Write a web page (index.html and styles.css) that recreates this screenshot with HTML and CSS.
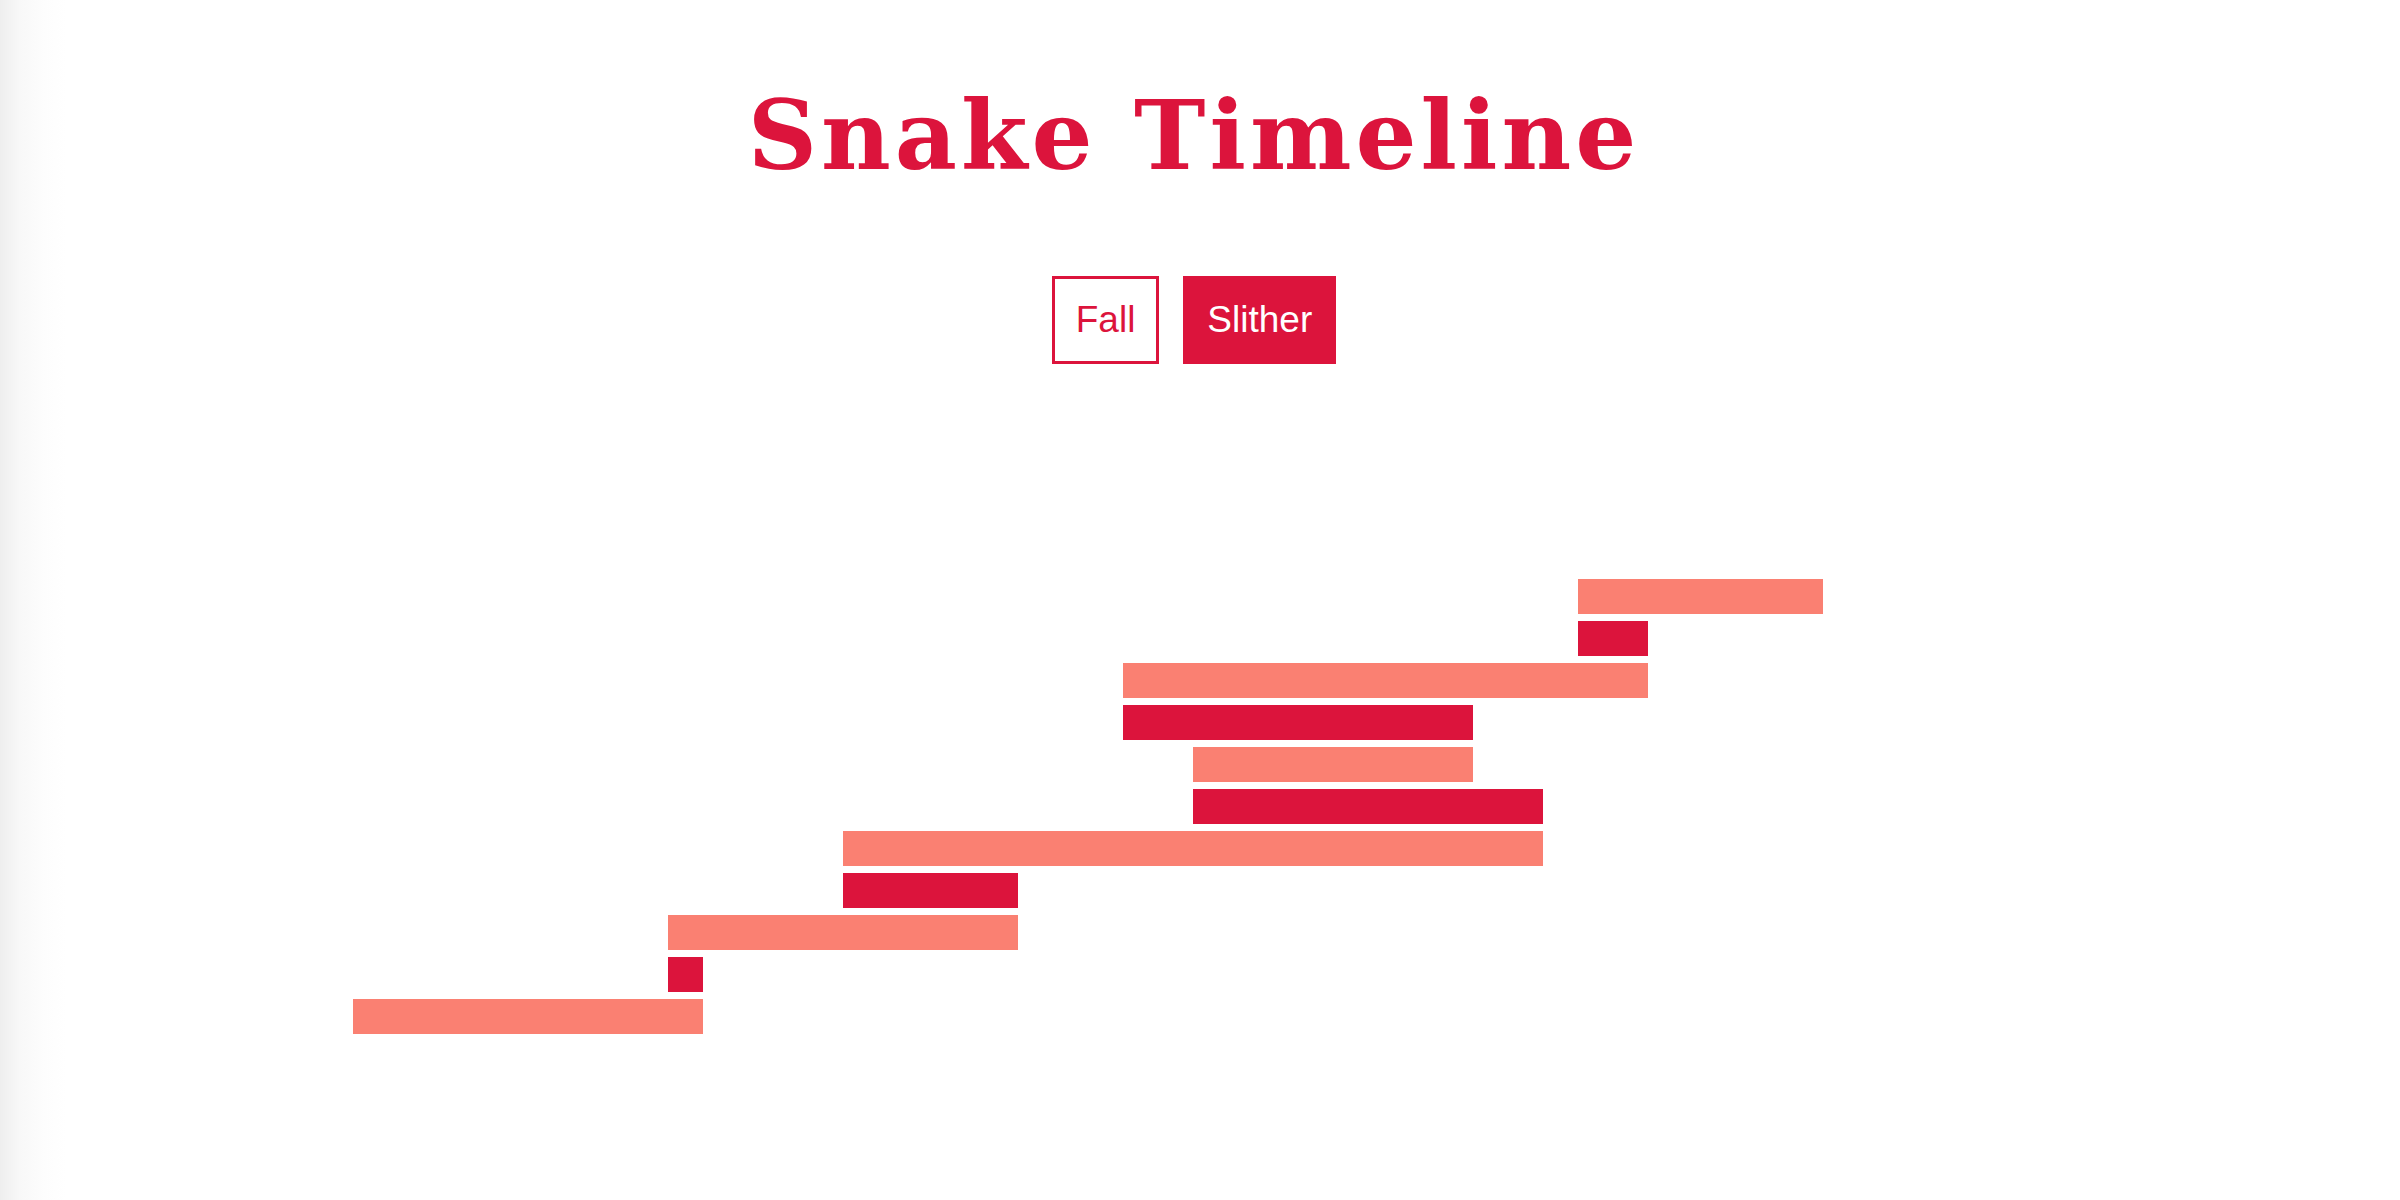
FILE: index.html
```html
<!DOCTYPE html>
<html lang="en">
<head>
    <meta charset="UTF-8">
    <title>Snake Timeline</title>
    <link rel="stylesheet" href="styles.css">
</head>
<body>

<div class="page">
    <h1 class="title">Snake Timeline</h1>

    <div class="modes">
        <button type="button" class="mode">Fall</button>
        <button type="button" class="mode active">Slither</button>
    </div>

    <!-- one row per segment, columns are time units -->
    <div class="timeline">
        <div class="bar fall" style="grid-column:36 / 43"></div>
        <div class="bar slither" style="grid-column:36 / 38"></div>
        <div class="bar fall" style="grid-column:23 / 38"></div>
        <div class="bar slither" style="grid-column:23 / 33"></div>
        <div class="bar fall" style="grid-column:25 / 33"></div>
        <div class="bar slither" style="grid-column:25 / 35"></div>
        <div class="bar fall" style="grid-column:15 / 35"></div>
        <div class="bar slither" style="grid-column:15 / 20"></div>
        <div class="bar fall" style="grid-column:10 / 20"></div>
        <div class="bar slither" style="grid-column:10 / 11"></div>
        <div class="bar fall" style="grid-column:1 / 11"></div>
    </div>
</div>

</body>
</html>
```

FILE: styles.css
```css
*{box-sizing:border-box}
html,body{
    margin:0;
    height:100%;
}
body{
    background:linear-gradient(to right,#eeeeee 0,#f8f8f8 20px,#fdfdfd 45px,#ffffff 66px);
    padding-right:12px;
}
.page{
    display:flex;
    flex-direction:column;
    align-items:center;
    padding-top:80px;
}
.title{
    margin:0;
    font-family:"DejaVu Serif",serif;
    font-weight:bold;
    font-size:96px;
    line-height:112px;
    letter-spacing:4px;
    color:crimson;
}
.modes{
    display:flex;
    gap:24px;
    margin-top:84px;
}
.mode{
    height:88px;
    padding:0 21px;
    border:3px solid crimson;
    background:white;
    color:crimson;
    font-family:"Liberation Sans",Arial,sans-serif;
    font-size:37px;
    cursor:pointer;
}
.mode.active{
    background:crimson;
    color:white;
}
.timeline{
    align-self:flex-start;
    display:grid;
    grid-template-columns:repeat(42,35px);
    grid-auto-rows:35px;
    row-gap:7px;
    margin-top:215px;
    margin-left:353px;
}
.bar.fall{background:salmon}
.bar.slither{background:crimson}
```
